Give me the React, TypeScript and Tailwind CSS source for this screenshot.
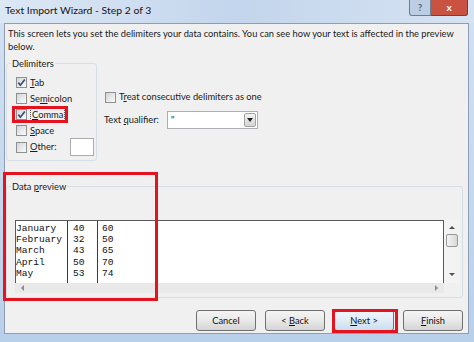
import React from "react";

const ui = "font-['Lato','Liberation_Sans',sans-serif]";

function Check({ checked = false }: { checked?: boolean }) {
  return (
    <span className="flex h-[11px] w-[11px] shrink-0 items-center justify-center border border-[#8e8f8f] bg-linear-to-br from-[#d2d5da] to-[#fbfbfb]">
      {checked && (
        <svg width="9" height="9" viewBox="0 0 9 9">
          <path d="M1.3 4.6 L3.4 7.2 L7.8 1.4" fill="none" stroke="#3b4f7a" strokeWidth="1.7" />
        </svg>
      )}
    </span>
  );
}

function Row({ checked, children }: { checked?: boolean; children: React.ReactNode }) {
  return (
    <div className="flex h-[16px] items-center gap-[3px]">
      <Check checked={checked} />
      <span className="leading-[13px]">{children}</span>
    </div>
  );
}

function Button({ children, primary = false }: { children: React.ReactNode; primary?: boolean }) {
  return (
    <button
      type="button"
      className={
        primary
          ? "flex h-[21px] w-[60px] items-center justify-center rounded-[3px] border border-[#3c7fb1] bg-linear-to-b from-[#f0f6fb] via-[#e1ecf6] to-[#c9dff0] text-[#111]"
          : "flex h-[21px] w-[60px] items-center justify-center rounded-[3px] border border-[#707070] bg-linear-to-b from-[#f4f4f4] via-[#e9e9e9] to-[#d4d4d4] text-[#111]"
      }
    >
      <span>{children}</span>
    </button>
  );
}

const months = ["January", "February", "March", "April", "May"];
const colA = ["40", "32", "43", "50", "53"];
const colB = ["60", "50", "65", "70", "74"];

export default function App() {
  return (
    <div className={`relative flex h-[342px] w-[474px] flex-col overflow-hidden bg-linear-to-b from-[#d3e2f3] to-[#b9d0ea] text-[9.3px] text-[#1a1a1a] ${ui}`}>
      {/* title bar */}
      <div className="flex h-[23px] shrink-0 justify-between bg-linear-to-r from-[#dde8f5] via-[#c3d5ec] to-[#d6e3f2]">
        <div className="self-center pb-[1px] pl-[5px] text-[10.4px] text-[#151515]">Text Import Wizard - Step 2 of 3</div>
        <div className="mr-[6px] flex h-[16px] items-stretch">
          <span className="flex w-[22px] items-center justify-center rounded-bl-[3px] border border-t-0 border-[#6d7c93] bg-[#bccde4] text-[9px] font-bold text-[#4b5a70]">
            ?
          </span>
          <span className="flex w-[37px] items-center justify-center rounded-br-[3px] border border-l-0 border-t-0 border-[#7f3a31] bg-[#c95340] text-[10px] font-bold text-white">
            x
          </span>
        </div>
      </div>

      {/* client area */}
      <div className="ml-[4px] mr-[5px] flex flex-1 flex-col border border-[#8d9db3] bg-[#f0f0f0]">
        <p className="mt-[3px] w-[458px] pl-[3px] leading-[13px]">
          This screen lets you set the delimiters your data contains. You can see how your text is affected in the preview below.
        </p>

        <div className="mt-[4px] flex">
          <fieldset className="ml-[1px] w-[91px] rounded-[3px] border border-[#d5dfe5]">
            <legend className="ml-[4px] px-[1px] leading-[13px]">Delimiters</legend>
            <div className="pb-[4px] pl-[9px] pt-[4px]">
              <Row checked>
                <u>T</u>ab
              </Row>
              <Row>
                Se<u>m</u>icolon
              </Row>
              <Row checked>
                <span className="border border-dotted border-[#555] px-[1px]">
                  <u>C</u>omma
                </span>
              </Row>
              <Row>
                <u>S</u>pace
              </Row>
              <div className="flex h-[18px] items-center gap-[3px]">
                <Check />
                <span>
                  <u>O</u>ther:
                </span>
                <span className="ml-[10px] h-[18px] w-[24px] border border-[#abadb3] bg-white" />
              </div>
            </div>
          </fieldset>

          <div className="ml-[7px] flex flex-col pt-[32px]">
            <div className="ml-[1px] flex h-[16px] items-center gap-[3px]">
              <Check />
              <span>
                T<u>r</u>eat consecutive delimiters as one
              </span>
            </div>
            <div className="mt-[6px] flex h-[18px] items-center">
              <span className="w-[63px]">
                Text <u>q</u>ualifier:
              </span>
              <div className="flex h-[18px] w-[91px] items-center justify-between border border-[#abadb3] bg-white pl-[3px] pr-[1px]">
                <span>"</span>
                <span className="flex h-[14px] w-[12px] items-center justify-center rounded-[2px] border border-[#a3a3a3] bg-linear-to-b from-[#f3f3f3] to-[#d5d5d5]">
                  <span className="h-0 w-0 border-x-[3px] border-t-[4px] border-x-transparent border-t-[#222]" />
                </span>
              </div>
            </div>
          </div>
        </div>

        <fieldset className="ml-[1px] mt-[19px] w-[457px] rounded-[3px] border border-[#d5dfe5]">
          <legend className="ml-[4px] px-[1px] leading-[13px]">
            Data <u>p</u>review
          </legend>
          <div className="flex pb-[4px] pl-[8px] pt-[27px]">
            <div className="flex w-[429px] flex-col">
              <div className="flex h-[63px] border-x border-t border-[#5a5a5a] bg-white font-['Liberation_Mono',monospace] text-[9.6px] leading-[11.2px] text-[#111]">
                <div className="w-[52px] border-r border-[#3c3c3c] pt-[2px]">
                  {months.map((m) => (
                    <div key={m}>{m}</div>
                  ))}
                </div>
                <div className="w-[30px] border-r border-[#3c3c3c] pl-[5px] pt-[2px]">
                  {colA.map((v, i) => (
                    <div key={i}>{v}</div>
                  ))}
                </div>
                <div className="pl-[4px] pt-[2px]">
                  {colB.map((v, i) => (
                    <div key={i}>{v}</div>
                  ))}
                </div>
              </div>
              <div className="flex h-[10px] items-center justify-between bg-[#e9e9e9] px-[6px]">
                <span className="h-0 w-0 border-y-[3px] border-r-[3px] border-y-transparent border-r-[#8a8a8a]" />
                <span className="h-0 w-0 border-y-[3px] border-l-[3px] border-y-transparent border-l-[#8a8a8a]" />
              </div>
            </div>
            <div className="flex h-[63px] w-[15px] flex-col items-center bg-[#f3f3f3] pb-[7px] pt-[6px]">
              <span className="h-0 w-0 border-x-[3px] border-b-[3px] border-x-transparent border-b-[#505050]" />
              <span className="mt-[5px] h-[13px] w-[12px] rounded-[2px] border border-[#979797] bg-linear-to-r from-[#f4f4f4] to-[#d9d9d9]" />
              <span className="flex-1" />
              <span className="h-0 w-0 border-x-[3px] border-t-[3px] border-x-transparent border-t-[#505050]" />
            </div>
          </div>
        </fieldset>

        <div className="mt-[12px] flex justify-end gap-[9px] pr-[5px]">
          <Button>Cancel</Button>
          <Button>
            &lt; <u>B</u>ack
          </Button>
          <Button primary>
            <u>N</u>ext &gt;
          </Button>
          <Button>
            <u>F</u>inish
          </Button>
        </div>
      </div>
      <div className="h-[8px] shrink-0" />

      {/* red annotation boxes */}
      <div className="pointer-events-none absolute left-[12px] top-[106px] h-[17px] w-[56px] border-[3px] border-[#e3141f]" />
      <div className="pointer-events-none absolute left-[3px] top-[172px] h-[129px] w-[155px] border-[3px] border-[#e3141f]" />
      <div className="pointer-events-none absolute left-[332px] top-[309px] h-[24px] w-[66px] border-[3px] border-[#e3141f]" />
    </div>
  );
}
